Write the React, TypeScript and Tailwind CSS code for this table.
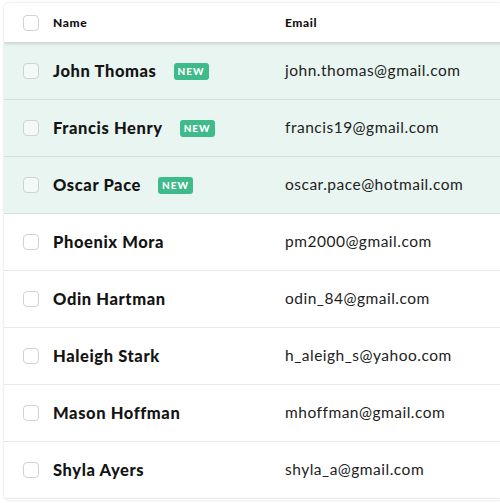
import React from "react";

type Contact = { name: string; email: string; isNew?: boolean };

const contacts: Contact[] = [
  { name: "John Thomas", email: "john.thomas@gmail.com", isNew: true },
  { name: "Francis Henry", email: "francis19@gmail.com", isNew: true },
  { name: "Oscar Pace", email: "oscar.pace@hotmail.com", isNew: true },
  { name: "Phoenix Mora", email: "pm2000@gmail.com" },
  { name: "Odin Hartman", email: "odin_84@gmail.com" },
  { name: "Haleigh Stark", email: "h_aleigh_s@yahoo.com" },
  { name: "Mason Hoffman", email: "mhoffman@gmail.com" },
  { name: "Shyla Ayers", email: "shyla_a@gmail.com" },
];

function Checkbox() {
  return (
    <span className="block w-[16px] h-[16px] rounded-[4px] border border-[#cfd3d1] bg-white/40" />
  );
}

export default function App() {
  return (
    <div className="w-[500px] h-[503px] bg-white pl-[4px] pt-[3px] overflow-hidden font-['Lato',sans-serif]">
      <div className="w-[500px] h-[497px] bg-white rounded-[5px] shadow-[0_0_3px_rgba(0,0,0,0.15)] overflow-hidden">
        {/* header */}
        <div className="relative z-10 flex items-center h-[40px] bg-white border-b border-[#d6d6d6] shadow-[0_1px_3px_rgba(0,0,0,0.12)]">
          <div className="w-[49px] flex justify-center pl-[5px]">
            <Checkbox />
          </div>
          <div className="w-[232px] text-[12px] font-black text-[#111] tracking-[0.6px]">Name</div>
          <div className="text-[12px] font-black text-[#111] tracking-[0.6px]">Email</div>
        </div>

        {contacts.map((c) => (
          <div
            key={c.email}
            className={
              c.isNew
                ? "flex items-center h-[57px] bg-[#e9f5f1] border-b border-[#cde4dc]"
                : "flex items-center h-[57px] bg-white border-b border-[#e8e8e8]"
            }
          >
            <div className="w-[49px] flex justify-center pl-[5px]">
              <Checkbox />
            </div>
            <div className="w-[232px] flex items-center gap-[17px]">
              <span className="text-[16.5px] font-black text-[#141414] tracking-[0.6px]">{c.name}</span>
              {c.isNew && (
                <span className="h-[17px] px-[4px] flex items-center rounded-[3px] bg-[#3fba8b] text-white text-[10px] font-black tracking-[1px]">
                  NEW
                </span>
              )}
            </div>
            <div className="text-[15.5px] text-[#222] tracking-[0.5px]">{c.email}</div>
          </div>
        ))}
      </div>
    </div>
  );
}
